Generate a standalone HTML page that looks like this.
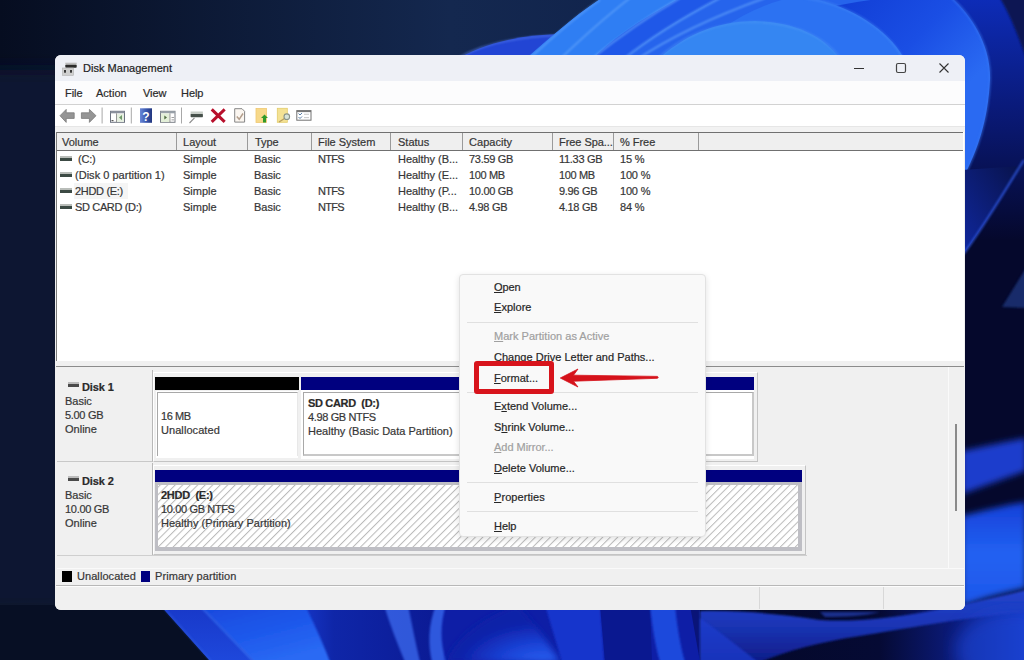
<!DOCTYPE html>
<html><head><meta charset="utf-8">
<style>
*{margin:0;padding:0;box-sizing:border-box}
html,body{width:1024px;height:660px;overflow:hidden;background:#0b1733}
body{position:relative;font-family:"Liberation Sans",sans-serif;font-size:11px;color:#1b1b1b}
.a{position:absolute}
.t{position:absolute;white-space:nowrap;-webkit-text-stroke:0.2px currentColor}
u{text-decoration:underline;text-underline-offset:1px}
#bg{position:absolute;left:0;top:0;width:1024px;height:660px}
#win{position:absolute;left:55px;top:55px;width:910px;height:555px;border-radius:6px;overflow:hidden;background:#f0f0f0}
</style></head><body>
<svg id="bg" width="1024" height="660" viewBox="0 0 1024 660">
<defs>
  <linearGradient id="navy" x1="0" y1="0" x2="1" y2="0">
    <stop offset="0" stop-color="#060d20"/>
    <stop offset="0.44" stop-color="#14284f"/>
    <stop offset="1" stop-color="#0a1a48"/>
  </linearGradient>
  <linearGradient id="pmain" x1="0" y1="1" x2="1" y2="0">
    <stop offset="0" stop-color="#2f78f0"/>
    <stop offset="1" stop-color="#2a66ee"/>
  </linearGradient>
  <linearGradient id="arch3" x1="0.4" y1="0" x2="1" y2="0.35">
    <stop offset="0" stop-color="#0f3ad2"/>
    <stop offset="0.6" stop-color="#1a4ee4"/>
    <stop offset="1" stop-color="#2a6af2"/>
  </linearGradient>
  <linearGradient id="ring4" x1="0" y1="0" x2="0" y2="1">
    <stop offset="0" stop-color="#0d2cb8"/>
    <stop offset="0.45" stop-color="#0a1a7a"/>
    <stop offset="1" stop-color="#05082c"/>
  </linearGradient>
  <linearGradient id="b1" x1="0" y1="0" x2="1" y2="0">
    <stop offset="0" stop-color="#1838c8"/>
    <stop offset="0.5" stop-color="#1636c8"/>
    <stop offset="0.62" stop-color="#0f26a8"/>
    <stop offset="1" stop-color="#0b1a94"/>
  </linearGradient>
  <radialGradient id="rb1" cx="0.85" cy="1.05" r="0.75">
    <stop offset="0" stop-color="#2a64f4"/><stop offset="0.5" stop-color="#1a42d6"/><stop offset="1" stop-color="#0e20a8"/>
  </radialGradient>
  <linearGradient id="sw1" x1="0" y1="0" x2="0" y2="1">
    <stop offset="0" stop-color="#2244cc"/><stop offset="0.5" stop-color="#1a34b4"/><stop offset="1" stop-color="#0f1c88"/>
  </linearGradient>
  <linearGradient id="br1" x1="0" y1="0" x2="1" y2="0">
    <stop offset="0" stop-color="#040826"/><stop offset="0.55" stop-color="#050a34"/><stop offset="0.8" stop-color="#0c1c80"/><stop offset="1" stop-color="#1638c4"/>
  </linearGradient>
  <linearGradient id="rs1" x1="0" y1="0" x2="0" y2="1">
    <stop offset="0" stop-color="#1640d8"/><stop offset="0.5" stop-color="#2262f2"/><stop offset="1" stop-color="#1e56ea"/>
  </linearGradient>
  <linearGradient id="pb1" x1="1" y1="0" x2="0" y2="1">
    <stop offset="0" stop-color="#08124a"/><stop offset="1" stop-color="#1028a0"/>
  </linearGradient>
  <linearGradient id="band1" x1="0" y1="0" x2="0" y2="1">
    <stop offset="0" stop-color="#1838c8"/><stop offset="1" stop-color="#1e48dc"/>
  </linearGradient>
  <linearGradient id="band2" x1="0" y1="0" x2="0.6" y2="1">
    <stop offset="0" stop-color="#1848dc"/><stop offset="0.6" stop-color="#1f5aec"/><stop offset="1" stop-color="#2a6af4"/>
  </linearGradient>
  <filter id="bl1"><feGaussianBlur stdDeviation="1.2"/></filter>
  <filter id="bl3"><feGaussianBlur stdDeviation="3"/></filter>
  <filter id="bl8"><feGaussianBlur stdDeviation="8"/></filter>
</defs>
<rect width="1024" height="660" fill="url(#navy)"/>
<rect x="-30" y="70" width="95" height="540" fill="#0a1530" filter="url(#bl8)"/>

<!-- ===== top ===== -->
<path d="M452 62 C480 44 520 34 565 34 L600 62 Z" fill="#2245d4"/>
<path d="M456 59 C482 44 520 36 565 35" fill="none" stroke="#5a80f0" stroke-width="1.4" opacity="0.7" filter="url(#bl1)"/>
<path d="M522 62 C548 40 575 15 602 -2 L1024 -2 L1024 62 Z" fill="#2a6cee"/>
<path d="M522 62 C548 40 575 15 602 -2 L680 -2 C640 20 610 40 590 62 Z" fill="#2f7ef3"/>
<path d="M590 62 C610 40 640 20 680 -2 L720 -2 C680 18 645 40 622 62 Z" fill="#1f58e8"/>
<path d="M622 62 C645 40 680 18 720 -2 L900 -2 C800 10 700 35 660 62 Z" fill="#2664ec"/>
<g stroke="#6aaafc" stroke-width="1.5" fill="none" opacity="0.8" filter="url(#bl1)">
  <path d="M530 58 C552 38 576 16 600 0"/>
  <path d="M559 60 C582 38 604 18 630 -2"/>
  <path d="M590 60 C615 40 645 18 680 -2"/>
  <path d="M622 60 C650 38 682 18 720 -2"/>
  <path d="M636 60 C672 36 715 16 765 -2"/>
</g>
<!-- ring 4 (right of arch 3) -->
<path d="M940 -2 L1026 -2 L1026 240 L950 240 Z" fill="url(#ring4)"/>
<path d="M1000 -2 C1010 15 1018 35 1026 58 L1026 -2 Z" fill="#0b1652" filter="url(#bl1)"/>
<!-- arch 3 -->
<path d="M690 62 C760 20 850 -2 900 -2 L952 -2 C976 20 991 50 990 80 C988 120 978 150 962 180 L880 180 Z" fill="url(#arch3)"/>
<path d="M952 -2 C976 20 991 50 990 80 C988 120 978 150 962 180" fill="none" stroke="#3a7af4" stroke-width="2" opacity="0.6" filter="url(#bl1)"/>
<!-- arch 2 -->
<path d="M680 62 C720 25 760 2 800 -4 C850 4 890 30 906 62 Z" fill="#2c72f2"/>
<path d="M805 -2 C852 5 888 30 904 60" fill="none" stroke="#4a90f8" stroke-width="1.5" opacity="0.6" filter="url(#bl1)"/>
<!-- dome 1 -->
<path d="M655 62 C682 36 716 21 755 21 C800 22 828 40 842 62 Z" fill="#3586f2"/>
<path d="M657 59 C682 36 716 22 755 22 C800 23 828 40 841 59" fill="none" stroke="#5aa0f8" stroke-width="1.2" opacity="0.6" filter="url(#bl1)"/>
<!-- ===== right strip ===== -->
<rect x="962" y="240" width="64" height="380" fill="#05082c"/>
<path d="M1022 166 C1005 190 985 225 962 256 L962 170 Z" fill="url(#pb1)"/>
<path d="M1024 160 C1005 190 985 225 962 256" stroke="#3058e0" stroke-width="2" fill="none" opacity="0.9" filter="url(#bl1)"/>
<path d="M1026 268 L1026 308 L1002 307 Z" fill="#1a3274" opacity="0.85" filter="url(#bl1)"/>
<path d="M962 451 C985 446 1005 442 1026 438 L1026 471 C1005 478 985 486 962 494 Z" fill="#1a3ccc" filter="url(#bl3)"/>
<path d="M962 516 C985 510 1005 505 1026 502 L1026 588 C1000 594 985 598 962 606 Z" fill="url(#rs1)" filter="url(#bl3)"/>
<!-- ===== bottom strip ===== -->
<rect x="-2" y="605" width="1030" height="60" fill="#070f24"/>
<path d="M160 605 L211 662 L440 662 L440 605 Z" fill="url(#b1)"/>
<path d="M160 605 L211 662 L254 662 L199 605 Z" fill="url(#band1)"/>
<path d="M199 605 L254 662 L330 662 C322 640 312 620 305 605 Z" fill="url(#band2)" filter="url(#bl1)"/>
<path d="M200 606 L254 662" stroke="#4a7ef4" stroke-width="1.5" opacity="0.6" filter="url(#bl1)"/>
<path d="M162 606 L212 662" stroke="#3a6ae8" stroke-width="1.2" opacity="0.5" filter="url(#bl1)"/>
<path d="M384 605 L408 605 C412 625 416 645 420 662 L405 662 C398 645 390 625 384 605 Z" fill="#3d6cf0" opacity="0.75" filter="url(#bl1)"/>
<path d="M440 605 L720 605 L720 662 L440 662 Z" fill="#0e1ea6"/>
<path d="M436 605 C428 625 428 645 432 662 L446 662 C440 642 440 624 446 605 Z" fill="#3464ea" opacity="0.85" filter="url(#bl1)"/>
<path d="M446 662 C455 640 480 618 518 605 C535 625 550 645 560 662 Z" fill="url(#rb1)" filter="url(#bl3)"/>
<path d="M545 605 L600 605 L604 662 L562 662 Z" fill="#1636cc" filter="url(#bl1)"/>
<path d="M600 605 L650 605 L652 662 L605 662 Z" fill="#0a1890"/>
<path d="M650 605 L675 605 C677 625 680 645 685 662 L660 662 C655 645 652 625 650 605 Z" fill="#1e48dc" filter="url(#bl1)"/>
<path d="M690 605 L720 605 L720 662 L700 662 Z" fill="#0a1478"/>
<path d="M700 605 L1026 605 L1026 662 L700 662 Z" fill="url(#br1)"/>
<path d="M700 611 C740 610 780 614 820 620 C880 624 950 608 1026 590 L1026 612 C960 618 900 630 860 636 C820 642 790 650 760 662 L700 662 Z" fill="url(#sw1)" filter="url(#bl1)"/>
<path d="M700 618 C720 632 740 648 758 662 L700 662 Z" fill="#1e3cd0" opacity="0.7" filter="url(#bl1)"/>
<path d="M820 612 C840 612 860 612 880 612 C865 616 845 617 825 617 Z" fill="#2a48c8" opacity="0.6" filter="url(#bl1)"/>
<ellipse cx="1015" cy="650" rx="60" ry="40" fill="#1c46d8" opacity="0.6" filter="url(#bl8)"/>
</svg>
<div id="win">
<div class="a" style="left:0px;top:0px;width:910px;height:26px;background:#eef0f6"></div>
<div class="t" style="left:28px;top:8px;font-size:11px;line-height:11px;color:#202020;;letter-spacing:0.024px;">Disk Management</div>
<svg class="a" style="left:795px;top:5px" width="105" height="18" viewBox="850 60 105 18"><path d="M854 68.5H864" stroke="#333" stroke-width="1.1"/><rect x="896.5" y="63.5" width="9" height="9" rx="1.5" fill="none" stroke="#444" stroke-width="1.2"/><path d="M939.5 63.5L948.5 72.5M948.5 63.5L939.5 72.5" stroke="#333" stroke-width="1.1"/></svg>
<div class="a" style="left:0px;top:26px;width:910px;height:23px;background:#fcfcfd"></div>
<div class="t" style="left:10px;top:33px;font-size:11px;line-height:11px;color:#2a2a2a;;letter-spacing:-0.063px;">File</div>
<div class="t" style="left:41px;top:33px;font-size:11px;line-height:11px;color:#2a2a2a;;letter-spacing:0.010px;">Action</div>
<div class="t" style="left:88px;top:33px;font-size:11px;line-height:11px;color:#2a2a2a;;letter-spacing:-0.063px;">View</div>
<div class="t" style="left:126px;top:33px;font-size:11px;line-height:11px;color:#2a2a2a;;letter-spacing:-0.063px;">Help</div>
<div class="a" style="left:0px;top:49px;width:910px;height:1px;background:#d2d2d2"></div>
<div class="a" style="left:0px;top:50px;width:910px;height:21px;background:#ffffff"></div>
<div class="a" style="left:0px;top:71px;width:910px;height:1px;background:#e6e6e6"></div>
<div class="a" style="left:0px;top:72px;width:910px;height:5px;background:#f2f2f2"></div>
<svg class="a" style="left:0px;top:0px" width="300" height="80" viewBox="55 55 300 80">
<defs>
  <linearGradient id="helpg" x1="0" y1="0" x2="1" y2="0">
    <stop offset="0" stop-color="#6a88d8"/><stop offset="0.5" stop-color="#3a58b0"/><stop offset="1" stop-color="#22367e"/>
  </linearGradient>
</defs>
<!-- title icon -->
<rect x="65.3" y="62.7" width="11.4" height="2" fill="#bdbdbd"/>
<rect x="65.3" y="64.7" width="11.4" height="3" rx="0.8" fill="#2b2b2b"/>
<rect x="62.5" y="68" width="11" height="7.3" fill="#cfcfcf" stroke="#b0b0b0" stroke-width="0.6"/>
<rect x="64" y="70" width="2" height="2.7" fill="#3a3a3a"/>
<rect x="70" y="70" width="2" height="2.7" fill="#3a3a3a"/>
<!-- back arrow -->
<path d="M60 115.7 L66.2 109.4 L66.2 112.8 L74.2 112.8 L74.2 118.4 L66.2 118.4 L66.2 122.4 Z" fill="#959595" stroke="#7a7a7a" stroke-width="0.8" stroke-linejoin="round"/>
<!-- forward arrow -->
<path d="M96 115.7 L89.4 109.4 L89.4 112.8 L81.4 112.8 L81.4 118.4 L89.4 118.4 L89.4 122.4 Z" fill="#959595" stroke="#7a7a7a" stroke-width="0.8" stroke-linejoin="round"/>
<!-- separators -->
<rect x="101.6" y="107.5" width="1" height="16" fill="#a8a8a8"/>
<rect x="130.8" y="107.5" width="1" height="16" fill="#a8a8a8"/>
<rect x="181" y="107.5" width="1" height="16" fill="#a8a8a8"/>
<!-- icon3: console tree window -->
<rect x="110.5" y="111.3" width="14" height="11" fill="#ffffff" stroke="#6c7280" stroke-width="1"/>
<rect x="110.5" y="111.3" width="14" height="2" fill="#8a909c"/>
<rect x="116" y="113.3" width="0.9" height="9" fill="#8a8a8a"/>
<rect x="117" y="113.8" width="7" height="8" fill="#e6efe0"/>
<path d="M122 115 L119 117.6 L122 120.2 Z" fill="#6f9a6a"/>
<rect x="111.5" y="120" width="2" height="1.2" fill="#555"/>
<!-- help -->
<rect x="140" y="108.3" width="12" height="14.5" fill="url(#helpg)"/>
<text x="146" y="120.5" font-family="Liberation Sans" font-weight="bold" font-size="12" fill="#ffffff" text-anchor="middle">?</text>
<!-- icon5 -->
<rect x="160.5" y="111.3" width="14.5" height="11" fill="#ffffff" stroke="#7a7f86" stroke-width="1"/>
<rect x="160.5" y="111.3" width="14.5" height="2" fill="#98a0a8"/>
<rect x="161" y="113.5" width="8.5" height="8.5" fill="#e3efd8"/>
<rect x="169.5" y="113.3" width="0.9" height="9" fill="#8a8a8a"/>
<path d="M164.3 115.5 L167 117.5 L164.3 119.5 Z" fill="#4e6a3e"/>
<rect x="171.5" y="117" width="2.5" height="0.8" fill="#888"/>
<rect x="171.5" y="119.5" width="2.5" height="0.8" fill="#888"/>
<!-- drive w/ cable -->
<rect x="190.6" y="111.5" width="12.3" height="2.5" fill="#c8cec8"/>
<rect x="190.6" y="114" width="12.3" height="3.2" rx="0.6" fill="#46504a"/>
<path d="M189.5 123 L194.5 117.8" stroke="#8a8a8a" stroke-width="1.1"/>
<!-- red X -->
<path d="M212.8 110.4 L223.6 120.8 M223.6 110.4 L212.8 120.8" stroke="#b8102c" stroke-width="3" stroke-linecap="square"/>
<!-- doc with check -->
<path d="M234.7 108.7 L242 108.7 L244.6 111.3 L244.6 122.1 L234.7 122.1 Z" fill="#fbf6f0" stroke="#858585" stroke-width="1"/>
<path d="M236.8 116.5 L239.2 119.3 L243 113.5" fill="none" stroke="#b39e8c" stroke-width="1.5"/>
<!-- yellow folder w/ green arrow -->
<rect x="256" y="108.5" width="10.5" height="14" fill="#f7d98a" stroke="#efc870" stroke-width="0.8"/>
<path d="M264.5 114.5 L268 118 L266 118 L266 122.6 L263 122.6 L263 118 L261 118 Z" fill="#2f9a2a"/>
<!-- yellow doc w/ magnifier -->
<rect x="277.3" y="108.3" width="10" height="14" fill="#f4e294" stroke="#e3cc6a" stroke-width="0.8"/>
<path d="M279 122 L284.5 118.5" stroke="#b8a060" stroke-width="1.4"/>
<circle cx="286.8" cy="116.7" r="2.8" fill="#d8e4d8" stroke="#8a948a" stroke-width="1.1"/>
<!-- checklist window -->
<rect x="296.8" y="110.6" width="14.2" height="9.6" fill="#ffffff" stroke="#727272" stroke-width="1"/>
<rect x="296.8" y="110.6" width="14.2" height="1.5" fill="#777"/>
<path d="M298.5 113.5 L300 115 L302 113 M298.5 117 L300 118.5 L302 116.5" fill="none" stroke="#5a7fa8" stroke-width="1"/>
<rect x="304" y="113.8" width="5" height="0.8" fill="#b8b8b8"/>
<rect x="304" y="117.3" width="5" height="0.8" fill="#b8b8b8"/>
</svg>
<div class="a" style="left:1px;top:77px;width:908px;height:229px;background:#fff"></div>
<div class="a" style="left:1px;top:77px;width:1px;height:234px;background:#7a7a7a"></div>
<div class="a" style="left:2px;top:77px;width:906px;height:19px;background:#efefef;border-top:1px solid #707070;border-bottom:1px solid #707070"></div>
<div class="a" style="left:121px;top:78px;width:1px;height:17px;background:#9a9a9a"></div>
<div class="a" style="left:192px;top:78px;width:1px;height:17px;background:#9a9a9a"></div>
<div class="a" style="left:256px;top:78px;width:1px;height:17px;background:#9a9a9a"></div>
<div class="a" style="left:335px;top:78px;width:1px;height:17px;background:#9a9a9a"></div>
<div class="a" style="left:407px;top:78px;width:1px;height:17px;background:#9a9a9a"></div>
<div class="a" style="left:497px;top:78px;width:1px;height:17px;background:#9a9a9a"></div>
<div class="a" style="left:558px;top:78px;width:1px;height:17px;background:#9a9a9a"></div>
<div class="a" style="left:643px;top:78px;width:1px;height:17px;background:#9a9a9a"></div>
<div class="t" style="left:7px;top:82px;font-size:11px;line-height:11px;color:#363636;;letter-spacing:0.010px;">Volume</div>
<div class="t" style="left:128px;top:82px;font-size:11px;line-height:11px;color:#363636;;letter-spacing:0.010px;">Layout</div>
<div class="t" style="left:200px;top:82px;font-size:11px;line-height:11px;color:#363636;;letter-spacing:-0.063px;">Type</div>
<div class="t" style="left:263px;top:82px;font-size:11px;line-height:11px;color:#363636;;letter-spacing:-0.014px;">File System</div>
<div class="t" style="left:343px;top:82px;font-size:11px;line-height:11px;color:#363636;;letter-spacing:0.010px;">Status</div>
<div class="t" style="left:414px;top:82px;font-size:11px;line-height:11px;color:#363636;;letter-spacing:0.041px;">Capacity</div>
<div class="t" style="left:504px;top:82px;font-size:11px;line-height:11px;color:#363636;;letter-spacing:-0.050px;">Free Spa...</div>
<div class="t" style="left:565px;top:82px;font-size:11px;line-height:11px;color:#363636;;letter-spacing:-0.038px;">% Free</div>
<div class="a" style="left:19px;top:128px;width:54px;height:16px;background:#f5f5f5"></div>
<div class="t" style="left:23px;top:99px;font-size:11px;line-height:11px;color:#363636;;letter-spacing:-0.183px;">(C:)</div>
<div class="t" style="left:128px;top:99px;font-size:11px;line-height:11px;color:#363636;;letter-spacing:0.010px;">Simple</div>
<div class="t" style="left:199px;top:99px;font-size:11px;line-height:11px;color:#363636;;letter-spacing:-0.018px;">Basic</div>
<div class="t" style="left:263px;top:99px;font-size:11px;line-height:11px;color:#363636;;letter-spacing:-0.733px;">NTFS</div>
<div class="t" style="left:343px;top:99px;font-size:11px;line-height:11px;color:#363636;;letter-spacing:-0.032px;">Healthy (B...</div>
<div class="t" style="left:414px;top:99px;font-size:11px;line-height:11px;color:#363636;;letter-spacing:-0.300px;">73.59 GB</div>
<div class="t" style="left:504px;top:99px;font-size:11px;line-height:11px;color:#363636;;letter-spacing:-0.300px;">11.33 GB</div>
<div class="t" style="left:565px;top:99px;font-size:11px;line-height:11px;color:#363636;;letter-spacing:-0.167px;">15 %</div>
<div class="a" style="left:5px;top:100.5px;width:12px;height:2px;background:#b9bdb9"></div>
<div class="a" style="left:5px;top:102.5px;width:12px;height:3px;background:#3c4a44"></div>
<div class="t" style="left:20px;top:115px;font-size:11px;line-height:11px;color:#363636;;letter-spacing:0.021px;">(Disk 0 partition 1)</div>
<div class="t" style="left:128px;top:115px;font-size:11px;line-height:11px;color:#363636;;letter-spacing:0.010px;">Simple</div>
<div class="t" style="left:199px;top:115px;font-size:11px;line-height:11px;color:#363636;;letter-spacing:-0.018px;">Basic</div>
<div class="t" style="left:343px;top:115px;font-size:11px;line-height:11px;color:#363636;;letter-spacing:-0.032px;">Healthy (E...</div>
<div class="t" style="left:414px;top:115px;font-size:11px;line-height:11px;color:#363636;;letter-spacing:-0.370px;">100 MB</div>
<div class="t" style="left:504px;top:115px;font-size:11px;line-height:11px;color:#363636;;letter-spacing:-0.370px;">100 MB</div>
<div class="t" style="left:565px;top:115px;font-size:11px;line-height:11px;color:#363636;;letter-spacing:-0.188px;">100 %</div>
<div class="a" style="left:5px;top:116.5px;width:12px;height:2px;background:#b9bdb9"></div>
<div class="a" style="left:5px;top:118.5px;width:12px;height:3px;background:#3c4a44"></div>
<div class="t" style="left:20px;top:131px;font-size:11px;line-height:11px;color:#363636;;letter-spacing:-0.306px;">2HDD (E:)</div>
<div class="t" style="left:128px;top:131px;font-size:11px;line-height:11px;color:#363636;;letter-spacing:0.010px;">Simple</div>
<div class="t" style="left:199px;top:131px;font-size:11px;line-height:11px;color:#363636;;letter-spacing:-0.018px;">Basic</div>
<div class="t" style="left:263px;top:131px;font-size:11px;line-height:11px;color:#363636;;letter-spacing:-0.733px;">NTFS</div>
<div class="t" style="left:343px;top:131px;font-size:11px;line-height:11px;color:#363636;;letter-spacing:-0.032px;">Healthy (P...</div>
<div class="t" style="left:414px;top:131px;font-size:11px;line-height:11px;color:#363636;;letter-spacing:-0.300px;">10.00 GB</div>
<div class="t" style="left:504px;top:131px;font-size:11px;line-height:11px;color:#363636;;letter-spacing:-0.308px;">9.96 GB</div>
<div class="t" style="left:565px;top:131px;font-size:11px;line-height:11px;color:#363636;;letter-spacing:-0.188px;">100 %</div>
<div class="a" style="left:5px;top:132.5px;width:12px;height:2px;background:#b9bdb9"></div>
<div class="a" style="left:5px;top:134.5px;width:12px;height:3px;background:#3c4a44"></div>
<div class="t" style="left:20px;top:147px;font-size:11px;line-height:11px;color:#363636;;letter-spacing:-0.350px;">SD CARD (D:)</div>
<div class="t" style="left:128px;top:147px;font-size:11px;line-height:11px;color:#363636;;letter-spacing:0.010px;">Simple</div>
<div class="t" style="left:199px;top:147px;font-size:11px;line-height:11px;color:#363636;;letter-spacing:-0.018px;">Basic</div>
<div class="t" style="left:263px;top:147px;font-size:11px;line-height:11px;color:#363636;;letter-spacing:-0.733px;">NTFS</div>
<div class="t" style="left:343px;top:147px;font-size:11px;line-height:11px;color:#363636;;letter-spacing:-0.032px;">Healthy (B...</div>
<div class="t" style="left:414px;top:147px;font-size:11px;line-height:11px;color:#363636;;letter-spacing:-0.308px;">4.98 GB</div>
<div class="t" style="left:504px;top:147px;font-size:11px;line-height:11px;color:#363636;;letter-spacing:-0.308px;">4.18 GB</div>
<div class="t" style="left:565px;top:147px;font-size:11px;line-height:11px;color:#363636;;letter-spacing:-0.167px;">84 %</div>
<div class="a" style="left:5px;top:148.5px;width:12px;height:2px;background:#b9bdb9"></div>
<div class="a" style="left:5px;top:150.5px;width:12px;height:3px;background:#3c4a44"></div>
<div class="a" style="left:1px;top:306px;width:908px;height:5px;background:#f0f0f0"></div>
<div class="a" style="left:1px;top:311px;width:908px;height:1px;background:#8c8c8c"></div>
<div class="a" style="left:2px;top:312px;width:891px;height:189px;background:#f0f0f0"></div>
<div class="a" style="left:2px;top:315px;width:96px;height:92px;background:#f0f0f0;border-right:1px solid #b8b8b8;border-bottom:1px solid #c8c8c8"></div>
<div class="a" style="left:2px;top:408px;width:96px;height:93px;background:#f0f0f0;border-right:1px solid #b8b8b8"></div>
<div class="a" style="left:13px;top:326.5px;width:11px;height:2px;background:#bcbcbc"></div>
<div class="a" style="left:13px;top:328.5px;width:11px;height:3px;background:#4a4a4a"></div>
<div class="t" style="left:27px;top:326.5px;font-size:11px;line-height:11px;color:#2a2a2a;font-weight:bold;letter-spacing:-0.088px;">Disk 1</div>
<div class="t" style="left:10px;top:340.5px;font-size:11px;line-height:11px;color:#363636;;letter-spacing:-0.018px;">Basic</div>
<div class="t" style="left:10px;top:354.5px;font-size:11px;line-height:11px;color:#363636;;letter-spacing:-0.308px;">5.00 GB</div>
<div class="t" style="left:10px;top:368.5px;font-size:11px;line-height:11px;color:#363636;;letter-spacing:0.010px;">Online</div>
<div class="a" style="left:13px;top:420.5px;width:11px;height:2px;background:#bcbcbc"></div>
<div class="a" style="left:13px;top:422.5px;width:11px;height:3px;background:#4a4a4a"></div>
<div class="t" style="left:27px;top:420.5px;font-size:11px;line-height:11px;color:#2a2a2a;font-weight:bold;letter-spacing:-0.088px;">Disk 2</div>
<div class="t" style="left:10px;top:434.5px;font-size:11px;line-height:11px;color:#363636;;letter-spacing:-0.018px;">Basic</div>
<div class="t" style="left:10px;top:448.5px;font-size:11px;line-height:11px;color:#363636;;letter-spacing:-0.300px;">10.00 GB</div>
<div class="t" style="left:10px;top:462.5px;font-size:11px;line-height:11px;color:#363636;;letter-spacing:0.010px;">Online</div>
<div class="a" style="left:98px;top:317px;width:605px;height:90px;background:#f0f0f0;border:1px solid #fff;border-right:1px solid #c4c4c4;border-bottom:1px solid #c4c4c4"></div>
<div class="a" style="left:100px;top:322px;width:144px;height:13px;background:#000"></div>
<div class="a" style="left:246px;top:322px;width:453px;height:13px;background:#00007f"></div>
<div class="a" style="left:100px;top:335px;width:144px;height:69px;background:#fff;border:1px solid #f0f0f0"></div>
<div class="a" style="left:102px;top:337px;width:141px;height:64px;background:#fff;border-left:1px solid #a8a8a8;border-top:1px solid #a8a8a8;border-right:1px solid #e8e8e8"></div>
<div class="t" style="left:106px;top:356px;font-size:11px;line-height:11px;color:#363636;;letter-spacing:-0.400px;">16 MB</div>
<div class="t" style="left:106px;top:370px;font-size:11px;line-height:11px;color:#363636;;letter-spacing:0.065px;">Unallocated</div>
<div class="a" style="left:246px;top:335px;width:453px;height:69px;background:#fff"></div>
<div class="a" style="left:248px;top:337px;width:451px;height:64px;background:#fff;border-left:1px solid #a8a8a8;border-top:1px solid #a8a8a8;border-right:2px solid #c8c8c8;border-bottom:2px solid #c8c8c8"></div>
<div class="t" style="left:253px;top:342.5px;font-size:11px;line-height:11px;color:#2a2a2a;font-weight:bold;letter-spacing:-0.321px;">SD CARD&nbsp; (D:)</div>
<div class="t" style="left:253px;top:356.5px;font-size:11px;line-height:11px;color:#363636;;letter-spacing:-0.368px;">4.98 GB NTFS</div>
<div class="t" style="left:253px;top:370.5px;font-size:11px;line-height:11px;color:#363636;;letter-spacing:0.011px;">Healthy (Basic Data Partition)</div>
<div class="a" style="left:98px;top:410px;width:653px;height:90px;background:#f0f0f0;border:1px solid #fff;border-right:1px solid #c4c4c4;border-bottom:1px solid #c4c4c4"></div>
<div class="a" style="left:100px;top:415px;width:647px;height:12px;background:#00007f"></div>
<svg class="a" style="left:100px;top:427px" width="647" height="69" viewBox="0 0 647 69"><defs><pattern id="hatch" width="5.3" height="5.3" patternUnits="userSpaceOnUse" patternTransform="rotate(45)"><rect width="5.3" height="5.3" fill="#fff"/><rect x="0" y="0" width="1" height="5.3" fill="#bababa"/></pattern></defs><rect x="0" y="0" width="647" height="69" fill="#bebec4"/><rect x="3" y="3" width="640" height="62" fill="url(#hatch)"/></svg>
<div class="t" style="left:106px;top:435px;font-size:11px;line-height:11px;color:#2a2a2a;font-weight:bold;letter-spacing:-0.272px;">2HDD&nbsp; (E:)</div>
<div class="t" style="left:106px;top:449px;font-size:11px;line-height:11px;color:#363636;;letter-spacing:-0.358px;">10.00 GB NTFS</div>
<div class="t" style="left:106px;top:463px;font-size:11px;line-height:11px;color:#363636;;letter-spacing:0.029px;">Healthy (Primary Partition)</div>
<div class="a" style="left:893px;top:312px;width:16px;height:201px;background:#f0f0f0;border-left:1px solid #fafafa"></div>
<div class="a" style="left:900px;top:369px;width:2px;height:87px;background:#8a8a8a"></div>
<div class="a" style="left:2px;top:500px;width:750px;height:1px;background:#cfcfcf"></div>
<div class="a" style="left:2px;top:513px;width:907px;height:1px;background:#fafafa"></div>
<div class="a" style="left:7px;top:516px;width:10px;height:11px;background:#000"></div>
<div class="t" style="left:22px;top:516px;font-size:11px;line-height:11px;color:#363636;;letter-spacing:0.065px;">Unallocated</div>
<div class="a" style="left:86px;top:516px;width:9px;height:11px;background:#00007f"></div>
<div class="t" style="left:100px;top:516px;font-size:11px;line-height:11px;color:#363636;;letter-spacing:0.078px;">Primary partition</div>
<div class="a" style="left:1px;top:530px;width:908px;height:1px;background:#b8b8b8"></div>
<div class="a" style="left:0px;top:531px;width:910px;height:24px;background:#f0f0f0"></div>
<div class="a" style="left:1px;top:531px;width:908px;height:1px;background:#fdfdfd"></div>
<div class="a" style="left:704px;top:532px;width:1px;height:22px;background:#d8d8d8"></div>
<div class="a" style="left:828px;top:532px;width:1px;height:22px;background:#d8d8d8"></div>
<div class="a" style="left:404px;top:219px;width:247px;height:263px;background:#f9f9f9;border:1px solid #e2e2e2;border-radius:4px;box-shadow:0 2px 6px rgba(0,0,0,0.12)"></div>
<div class="t" style="left:439px;top:227px;font-size:11px;line-height:11px;color:#262626;;letter-spacing:-0.063px;"><u>O</u>pen</div>
<div class="t" style="left:439px;top:247px;font-size:11px;line-height:11px;color:#262626;;letter-spacing:0.028px;"><u>E</u>xplore</div>
<div class="t" style="left:439px;top:276px;font-size:11px;line-height:11px;color:#a0a0a0;;letter-spacing:0.022px;"><u>M</u>ark Partition as Active</div>
<div class="t" style="left:439px;top:297px;font-size:11px;line-height:11px;color:#262626;;letter-spacing:0.010px;"><u>C</u>hange Drive Letter and Paths...</div>
<div class="t" style="left:439px;top:317.5px;font-size:11px;line-height:11px;color:#262626;;letter-spacing:0.006px;"><u>F</u>ormat...</div>
<div class="t" style="left:439px;top:346px;font-size:11px;line-height:11px;color:#262626;;letter-spacing:0.007px;">E<u>x</u>tend Volume...</div>
<div class="t" style="left:439px;top:366.5px;font-size:11px;line-height:11px;color:#262626;;letter-spacing:0.007px;">S<u>h</u>rink Volume...</div>
<div class="t" style="left:439px;top:387px;font-size:11px;line-height:11px;color:#a0a0a0;;letter-spacing:-0.022px;"><u>A</u>dd Mirror...</div>
<div class="t" style="left:439px;top:407.5px;font-size:11px;line-height:11px;color:#262626;;letter-spacing:0.007px;"><u>D</u>elete Volume...</div>
<div class="t" style="left:439px;top:436.5px;font-size:11px;line-height:11px;color:#262626;;letter-spacing:0.059px;"><u>P</u>roperties</div>
<div class="t" style="left:439px;top:465.5px;font-size:11px;line-height:11px;color:#262626;;letter-spacing:-0.063px;"><u>H</u>elp</div>
<div class="a" style="left:412px;top:267px;width:231px;height:1px;background:#e0e0e0"></div>
<div class="a" style="left:412px;top:337px;width:231px;height:1px;background:#e0e0e0"></div>
<div class="a" style="left:412px;top:427px;width:231px;height:1px;background:#e0e0e0"></div>
<div class="a" style="left:412px;top:456px;width:231px;height:1px;background:#e0e0e0"></div>
<div class="a" style="left:419px;top:306px;width:80px;height:33px;border:5px solid #d8141c;border-radius:3px"></div>
<svg class="a" style="left:500px;top:310px" width="110" height="26" viewBox="555 365 110 26"><path d="M560.3 378 L578 369 L573.5 375.2 L657.5 376.4 Q659 377.3 657.5 378.3 L573.5 381.2 L578 387 Z" fill="#d5121a" stroke="#d5121a" stroke-width="0.8" stroke-linejoin="round"/></svg>
</div>
</body></html>
